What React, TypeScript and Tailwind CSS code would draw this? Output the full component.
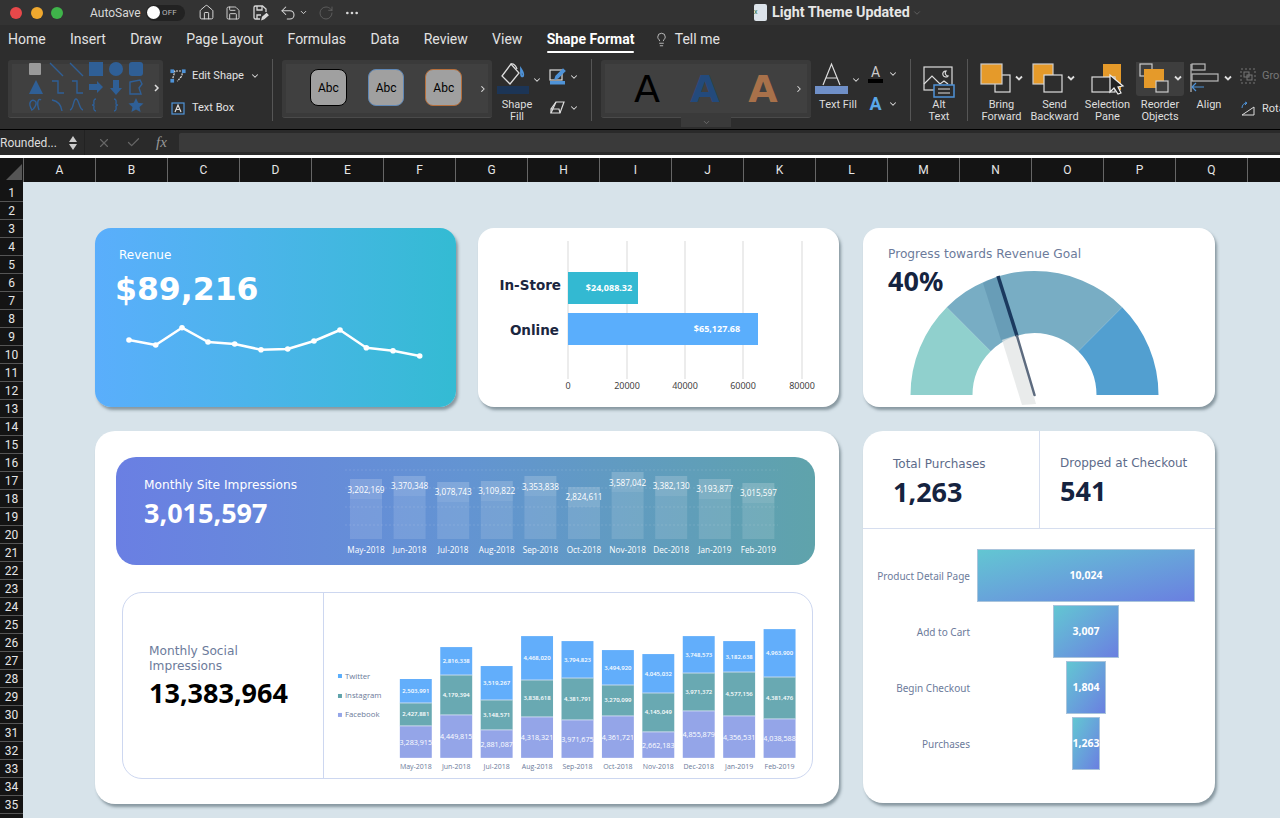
import type { ReactNode } from 'react'
import { ChevronDown, ChevronRight, Ellipsis, House, Lightbulb, RotateCw, Save, Undo2, X, Check } from 'lucide-react'

const columns = 'ABCDEFGHIJKLMNOPQ'.split('')
const rows = Array.from({ length: 35 }, (_, i) => i + 1)
const tabs = ['Home', 'Insert', 'Draw', 'Page Layout', 'Formulas', 'Data', 'Review', 'View']

const sitePoints = [
  { m: 'May-2018', v: '3,202,169', top: 479, ly: 493 },
  { m: 'Jun-2018', v: '3,370,348', top: 476, ly: 489 },
  { m: 'Jul-2018', v: '3,078,743', top: 482, ly: 495 },
  { m: 'Aug-2018', v: '3,109,822', top: 481, ly: 494 },
  { m: 'Sep-2018', v: '3,353,838', top: 476, ly: 490 },
  { m: 'Oct-2018', v: '2,824,611', top: 487, ly: 500 },
  { m: 'Nov-2018', v: '3,587,042', top: 472, ly: 486 },
  { m: 'Dec-2018', v: '3,382,130', top: 476, ly: 489 },
  { m: 'Jan-2019', v: '3,193,877', top: 479, ly: 492 },
  { m: 'Feb-2019', v: '3,015,597', top: 483, ly: 496 },
]

const socialPoints = [
  { m: 'May-2018', fb: '3,283,915', ig: '2,427,881', tw: '2,503,991', fy: 725, iy: 702, ty: 678 },
  { m: 'Jun-2018', fb: '4,449,815', ig: '4,179,394', tw: '2,816,338', fy: 714, iy: 674, ty: 646 },
  { m: 'Jul-2018', fb: '2,881,087', ig: '3,148,571', tw: '3,519,267', fy: 729, iy: 699, ty: 665 },
  { m: 'Aug-2018', fb: '4,318,321', ig: '3,838,618', tw: '4,468,020', fy: 716, iy: 679, ty: 635 },
  { m: 'Sep-2018', fb: '3,971,675', ig: '4,381,791', tw: '3,794,823', fy: 719, iy: 677, ty: 640 },
  { m: 'Oct-2018', fb: '4,361,721', ig: '3,270,099', tw: '3,494,920', fy: 715, iy: 684, ty: 649 },
  { m: 'Nov-2018', fb: '2,662,183', ig: '4,145,049', tw: '4,045,032', fy: 731, iy: 692, ty: 653 },
  { m: 'Dec-2018', fb: '4,855,879', ig: '3,971,372', tw: '3,748,573', fy: 710, iy: 672, ty: 635 },
  { m: 'Jan-2019', fb: '4,356,531', ig: '4,577,156', tw: '3,182,638', fy: 715, iy: 671, ty: 640 },
  { m: 'Feb-2019', fb: '4,038,588', ig: '4,381,476', tw: '4,963,900', fy: 718, iy: 676, ty: 628 },
]

const funnel = [
  { label: 'Product Detail Page', value: '10,024', width: 'w-[218px]' },
  { label: 'Add to Cart', value: '3,007', width: 'w-[66px]' },
  { label: 'Begin Checkout', value: '1,804', width: 'w-[40px]' },
  { label: 'Purchases', value: '1,263', width: 'w-[28px]' },
]

const spark = [
  [34, 120], [60.700, 125], [87, 107.700], [113, 122], [139.700, 124], [166, 129.700],
  [192.700, 129], [219, 121], [245, 110], [271.300, 127.700], [298, 130.700], [324.700, 136],
]

const uiFont = 'font-["Roboto","Liberation_Sans",sans-serif]'
const dejavu = 'font-["DejaVu_Sans","Liberation_Sans",sans-serif]'
const noto = 'font-["Noto_Sans","Open_Sans",sans-serif]'
const cardShadow = 'shadow-[2px_3px_3px_rgba(60,80,90,0.5)]'

function TitleBar() {
  return (
    <div className={`flex h-[25px] items-center bg-[#333333] text-[#d8d8d8] ${uiFont}`}>
      <div className="ml-[10px] flex gap-[8.500px]">
        <span className="h-[12px] w-[12px] rounded-full bg-[#e8484a]" />
        <span className="h-[12px] w-[12px] rounded-full bg-[#efa82e]" />
        <span className="h-[12px] w-[12px] rounded-full bg-[#3fb44a]" />
      </div>
      <span className="ml-[27px] w-[56px] text-[12px]">AutoSave</span>
      <div className="flex h-[16px] w-[39px] items-center rounded-full bg-[#222222] pl-[1px]">
        <span className="h-[13px] w-[13px] rounded-full bg-white" />
        <span className="ml-[2px] text-[8px] tracking-wide text-[#bbbbbb]">OFF</span>
      </div>
      <House className="ml-[13px]" size={17} strokeWidth={1.4} />
      <Save className="ml-[10px]" size={16} strokeWidth={1.4} />
      <svg className="ml-[10px]" width="18" height="18" viewBox="0 0 18 18" fill="none" stroke="currentColor" strokeWidth="1.3">
        <path d="M9 15H4.500A1.500 1.500 0 0 1 3 13.500v-10A1.500 1.500 0 0 1 4.500 2h7L15 5v3" />
        <path d="M6 2v4h5V2M6 15v-4h4" />
        <path d="M11 15.500l.6-2.300 4-3.600 1.400 1.500-4 3.700z" fill="currentColor" />
      </svg>
      <Undo2 className="ml-[10px]" size={18} strokeWidth={1.4} />
      <ChevronDown className="ml-[2px]" size={9} strokeWidth={2.5} />
      <RotateCw className="ml-[10px] text-[#666666]" size={16} strokeWidth={1.2} />
      <Ellipsis className="ml-[10px]" size={16} />
      <div className="ml-[394px] h-[17px] w-[13px] rounded-[2px] bg-[#dce3ea] text-[7px] leading-[17px] text-[#1e7145]">x</div>
      <span className="ml-[5px] text-[14.300px] font-bold text-[#e6e6e6]">Light Theme Updated</span>
      <ChevronDown className="ml-[2px] text-[#666666]" size={10} />
    </div>
  )
}

function TabBar() {
  return (
    <div className={`flex h-[28px] items-center gap-[24.300px] bg-[#2d2d2d] pl-[8px] pt-[1px] text-[14px] text-[#e2e2e2] ${uiFont}`}>
      {tabs.map((t) => (
        <span key={t}>{t}</span>
      ))}
      <span className="relative font-bold text-white">
        Shape Format
        <span className="absolute -bottom-[3px] left-0 h-[2px] w-full rounded bg-white" />
      </span>
      <div className="-ml-[5px] flex items-center gap-[6px]">
        <Lightbulb size={15} strokeWidth={1.2} />
        <span>Tell me</span>
      </div>
    </div>
  )
}

function Sep() {
  return <div className="mt-[6px] h-[62px] w-px shrink-0 bg-[#565656]" />
}

function Gallery({ width, children }: { width: string; children: ReactNode }) {
  return (
    <div className={`relative mt-[7px] h-[58px] shrink-0 rounded-[3px] border-b border-[#4a4a4a] bg-[#3a3a3a] p-[4px] ${width}`}>
      <div className="flex h-full w-full items-center bg-[#404040]">{children}</div>
    </div>
  )
}

function Chev({ className = '' }: { className?: string }) {
  return <ChevronDown className={`shrink-0 text-[#dddddd] ${className}`} size={10} strokeWidth={2.5} />
}

function ShapeIcons() {
  const c = '#2f5f96'
  return (
    <svg className="-ml-[4px] -mt-[4px] h-[58px] w-[155px] shrink-0" viewBox="0 0 155 58" fill="none" stroke={c} strokeWidth="1.4">
      <rect x="21" y="5" width="12" height="12" rx="1" fill="#9a9a9a" stroke="none" />
      <path d="M42 5l13 13M62 5l13 13" />
      <rect x="81" y="4" width="14" height="14" fill={c} stroke="none" />
      <circle cx="108" cy="11" r="7" fill={c} stroke="none" />
      <rect x="121" y="4" width="14" height="14" rx="3" fill={c} stroke="none" />
      <path d="M28 22l7 14H21z" fill={c} stroke="none" />
      <path d="M44 23h6v12h6M64 23h5v12h6" />
      <path d="M81 26h8v-3l6 6-6 6v-3h-8z" fill={c} stroke="none" />
      <path d="M105 22h6v8h3l-6 7-6-7h3z" fill={c} stroke="none" />
      <path d="M122 24l10-2 2 4-3 4 2 6h-11z" />
      <path d="M24 52c-5-8 0-11 3-9s-1 9-4 9M31 52c-3-9 0-12 2-10" />
      <path d="M44 42c6 1 9 4 10 11M62 52c4-1 3-11 6-11s3 10 7 11" />
      <path d="M88 41c-3 0-2 4-2 5s-1 1-2 1c1 0 2 0 2 1s-1 5 2 5M106 41c3 0 2 4 2 5s1 1 2 1c-1 0-2 0-2 1s1 5-2 5" />
      <path d="M128 40l2.200 4.800 5.300.6-4 3.500 1.100 5.100-4.600-2.600-4.600 2.600 1.100-5.100-4-3.500 5.300-.6z" fill={c} stroke="none" />
      <path d="M147 27l3 3-3 3" stroke="#dddddd" strokeWidth="1.5" />
    </svg>
  )
}

function AbcButton({ border }: { border: string }) {
  return (
    <div className={`-mt-[2px] flex h-[37px] w-[37px] items-center justify-center rounded-[8px] border-[1.5px] bg-[#a0a0a0] text-[12px] text-black ${border}`}>
      Abc
    </div>
  )
}

function RibbonLabel({ lines, className = '' }: { lines: string[]; className?: string }) {
  return (
    <div className={`text-center text-[11px] leading-[12px] text-[#dedede] ${className}`}>
      {lines.map((l) => (
        <div key={l}>{l}</div>
      ))}
    </div>
  )
}

function ArrangeButton({ width, lines, children }: { width: string; lines: string[]; children: ReactNode }) {
  return (
    <div className={`flex shrink-0 flex-col items-center pt-[9px] ${width}`}>
      <div className="h-[37px] w-full">{children}</div>
      <RibbonLabel lines={lines} className="whitespace-nowrap" />
    </div>
  )
}

const chevPath = (x: number, y: number) => `M${x - 3} ${y - 1.500}l3 3 3-3`

function Ribbon() {
  return (
    <div className={`flex h-[76px] items-start overflow-hidden bg-[#2d2d2d] pl-[8px] ${uiFont}`}>
      <Gallery width="w-[155px]">
        <ShapeIcons />
      </Gallery>
      <div className="flex w-[109px] shrink-0 flex-col gap-[16px] pl-[7px] pt-[15px] text-[11px] text-[#e2e2e2]">
        <div className="flex h-[16px] items-center">
          <svg width="16" height="14" viewBox="0 0 16 14" fill="none" stroke="#4f93d8" strokeWidth="1.200">
            <path d="M3 2h10M2 12l3-10M14 2c-3 2-1 4-3 6s-2 3-4 4" strokeDasharray="2 1" stroke="#dddddd" />
            <rect x="1" y="1" width="2.500" height="2.500" fill="#4f93d8" />
            <rect x="12.500" y="1" width="2.500" height="2.500" fill="#4f93d8" />
            <rect x="1" y="10.500" width="2.500" height="2.500" fill="#4f93d8" />
          </svg>
          <span className="ml-[6px]">Edit Shape</span>
          <Chev className="ml-[6px]" />
        </div>
        <div className="flex h-[16px] items-center">
          <svg width="16" height="15" viewBox="0 0 16 15" fill="none" stroke="#4f93d8" strokeWidth="1.200">
            <rect x="2" y="2" width="12" height="11" />
            <path d="M5 11l3-7 3 7M6.200 8.500h3.600" stroke="#dddddd" />
          </svg>
          <span className="ml-[6px]">Text Box</span>
        </div>
      </div>
      <Sep />
      <div className="ml-[9px]">
        <Gallery width="w-[210px]">
          <div className="flex w-full items-center gap-[21px] pl-[24px]">
            <AbcButton border="border-black" />
            <AbcButton border="border-[#5f87b5]" />
            <AbcButton border="border-[#b66f3c]" />
            <ChevronRight className="-ml-[5px] text-[#dddddd]" size={10} strokeWidth={2.5} />
          </div>
        </Gallery>
      </div>
      <div className="flex w-[53px] shrink-0 flex-col pt-[9px]">
        <div className="flex items-start pl-[5px]">
          <div className="w-[32px]">
            <svg width="32" height="24" viewBox="0 0 32 24" fill="none" stroke="#dddddd" strokeWidth="1.300">
              <path d="M14 2L5 14l8 8 9-11z" />
              <path d="M14 2c4-1 5 3 6 5" />
              <path d="M24 7c2 3 3 5 2 7-1 1-2 0-2-2s0-4 0-5z" stroke="#4f93d8" strokeWidth="1.800" />
            </svg>
            <div className="h-[8px] w-[32px] bg-[#1c3556]" />
          </div>
          <Chev className="ml-[3px] mt-[13px]" />
        </div>
        <RibbonLabel lines={['Shape', 'Fill']} className="mt-[5px] w-[50px]" />
      </div>
      <div className="flex w-[40px] shrink-0 flex-col gap-[15px] pl-[4px] pt-[15px]">
        <div className="flex items-center gap-[3px]">
          <svg width="17" height="17" viewBox="0 0 17 17" fill="none" stroke="#dddddd" strokeWidth="1.200">
            <rect x="1" y="2" width="12" height="10" />
            <path d="M6 11l1-3 7-7 2 2-7 7z" fill="#4f93d8" stroke="#4f93d8" />
            <rect x="1" y="13" width="15" height="3.500" fill="#4f93d8" stroke="none" />
          </svg>
          <Chev />
        </div>
        <div className="flex items-center gap-[3px]">
          <svg width="17" height="15" viewBox="0 0 17 15" fill="none" stroke="#dddddd" strokeWidth="1.200">
            <path d="M7 2h8l-4 11H2z" />
            <path d="M7 2L2 9v4M11 13l-1-4H2" />
          </svg>
          <Chev />
        </div>
      </div>
      <div className="ml-[6px]">
        <Sep />
      </div>
      <div className="ml-[9px]">
        <Gallery width="w-[210px]">
          <div className={`flex w-full items-center text-[38px] leading-none ${dejavu}`}>
            <span className="ml-[13px] w-[58px] text-center text-black">A</span>
            <span className="w-[58px] text-center font-bold text-[#234a7c]">A</span>
            <span className="w-[58px] text-center font-bold text-[#a8714a]">A</span>
            <ChevronRight className="ml-[2px] text-[#dddddd]" size={10} strokeWidth={2.5} />
          </div>
          <div className="absolute -bottom-[10px] left-[80px] flex h-[10px] w-[50px] items-center justify-center bg-[#3a3a3a]">
            <ChevronDown className="text-[#777777]" size={9} strokeWidth={2} />
          </div>
        </Gallery>
      </div>
      <div className="w-[55px] shrink-0 pl-[4px] pt-[9px]">
        <div className="flex items-start">
          <div className="w-[33px]">
            <svg width="33" height="24" viewBox="0 0 33 24" fill="none" stroke="#dddddd" strokeWidth="1.200">
              <path d="M8 23L16.500 2 25 23M11 16h11" />
            </svg>
            <div className="h-[8px] w-[33px] bg-[#6f8fc7]" />
          </div>
          <Chev className="ml-[3px] mt-[13px]" />
        </div>
        <RibbonLabel lines={['Text Fill']} className="mt-[5px] w-[46px] whitespace-nowrap" />
      </div>
      <div className="flex w-[39px] shrink-0 flex-col gap-[12px] pl-[2px] pt-[12px]">
        <div className="flex items-center gap-[5px]">
          <div className="w-[15px]">
            <div className="text-center text-[14px] leading-[14px] text-[#cccccc]">A</div>
            <div className="h-[4px] bg-black" />
          </div>
          <Chev />
        </div>
        <div className="flex items-center gap-[5px]">
          <span className="w-[15px] text-center text-[18px] font-bold leading-[18px] text-[#5aa7e8]">A</span>
          <Chev />
        </div>
      </div>
      <div className="ml-[5px]">
        <Sep />
      </div>
      <div className="flex w-[56px] shrink-0 flex-col items-center pt-[13px]">
        <svg width="32" height="32" viewBox="0 0 32 32" fill="none" stroke="#dddddd" strokeWidth="1.200">
          <rect x="1" y="1" width="28" height="23" />
          <path d="M1 18l8-8 8 8 4-3 4 3" />
          <path d="M23 5a3 3 0 1 0 2 5 3 3 0 0 1-2-5z" />
          <rect x="11" y="19" width="20" height="12" fill="#2d2d2d" stroke="#4f93d8" strokeWidth="1.500" />
          <path d="M15 23h12M15 27h12" />
        </svg>
        <RibbonLabel lines={['Alt', 'Text']} className="mt-[1px]" />
      </div>
      <Sep />
      <div className="ml-[7px] flex">
        <ArrangeButton width="w-[53px]" lines={['Bring', 'Forward']}>
          <svg width="53" height="36" viewBox="0 0 53 36" fill="none" stroke="#dddddd" strokeWidth="1.200">
            <rect x="20" y="13" width="15" height="17" />
            <rect x="6" y="2" width="21" height="20" fill="#e59a2a" stroke="#cccccc" />
            <path d={chevPath(44, 16)} strokeWidth="1.800" />
          </svg>
        </ArrangeButton>
        <ArrangeButton width="w-[53px]" lines={['Send', 'Backward']}>
          <svg width="53" height="36" viewBox="0 0 53 36" fill="none" stroke="#dddddd" strokeWidth="1.200">
            <rect x="5" y="2" width="20" height="20" fill="#e59a2a" stroke="#cccccc" />
            <rect x="16" y="13" width="18" height="17" fill="#2d2d2d" />
            <path d={chevPath(43, 16)} strokeWidth="1.800" />
          </svg>
        </ArrangeButton>
        <ArrangeButton width="w-[53px]" lines={['Selection', 'Pane']}>
          <svg width="53" height="36" viewBox="0 0 53 36" fill="none" stroke="#dddddd" strokeWidth="1.200">
            <rect x="22" y="2" width="18" height="26" fill="#e59a2a" stroke="none" />
            <rect x="11" y="15" width="23" height="15" fill="#2d2d2d" />
            <path d="M29 13l0 17 4-4 4 6 3-1-3-6 5-1z" fill="#222222" stroke="#eeeeee" />
          </svg>
        </ArrangeButton>
        <ArrangeButton width="w-[52px]" lines={['Reorder', 'Objects']}>
          <svg width="52" height="36" viewBox="0 0 52 36" fill="none" stroke="#cccccc" strokeWidth="1.200">
            <rect x="2" y="-2" width="48" height="36" rx="3" fill="#3e3e3e" stroke="none" />
            <rect x="6" y="2" width="12" height="12" />
            <rect x="10" y="7" width="20" height="19" fill="#e59a2a" stroke="none" />
            <rect x="22" y="19" width="12" height="11" fill="#3e3e3e" />
            <path d={chevPath(44, 16)} strokeWidth="1.800" stroke="#dddddd" />
          </svg>
        </ArrangeButton>
        <ArrangeButton width="w-[46px]" lines={['Align']}>
          <svg width="46" height="36" viewBox="0 0 46 36" fill="none" stroke="#bbbbbb" strokeWidth="1.200">
            <path d="M5 2v28" />
            <rect x="6" y="2" width="13" height="6" />
            <rect x="6" y="12" width="26" height="7" />
            <path d="M18 25H6m4-4l-4 4 4 4" stroke="#4f93d8" />
            <path d={chevPath(42, 16)} strokeWidth="1.800" stroke="#dddddd" />
          </svg>
        </ArrangeButton>
      </div>
      <div className="ml-[8px] flex shrink-0 flex-col gap-[16px] pt-[15px] text-[11px]">
        <div className="flex items-center gap-[6px] text-[#777777]">
          <svg width="16" height="16" viewBox="0 0 16 16" fill="none" stroke="#777777" strokeWidth="1">
            <rect x="1" y="1" width="14" height="14" strokeDasharray="2 2" />
            <rect x="4" y="4" width="5" height="5" />
            <rect x="7" y="7" width="5" height="5" />
          </svg>
          <span>Group</span>
        </div>
        <div className="flex items-center gap-[6px] text-[#dedede]">
          <svg width="16" height="16" viewBox="0 0 16 16" fill="none" stroke="#dddddd" strokeWidth="1">
            <path d="M2 14l12-8v8z" />
            <path d="M2 7c0-3 2-5 5-5M7 2L5 1M7 2L5 4" stroke="#4f93d8" />
          </svg>
          <span>Rotate</span>
        </div>
      </div>
    </div>
  )
}

function FormulaBar() {
  return (
    <div className={`flex h-[26px] items-center border-t border-black bg-[#2a2a2a] text-[#dedede] ${uiFont}`}>
      <span className="w-[62px] shrink-0 whitespace-nowrap text-[12px]">Rounded...</span>
      <div className="flex w-[22px] shrink-0 flex-col items-center gap-[2px]">
        <span className="h-0 w-0 border-x-[4px] border-b-[6px] border-x-transparent border-b-[#cccccc]" />
        <span className="h-0 w-0 border-x-[4px] border-t-[6px] border-x-transparent border-t-[#cccccc]" />
      </div>
      <div className="h-full w-px bg-[#222222]" />
      <X className="ml-[12px] text-[#666666]" size={14} strokeWidth={2} />
      <Check className="ml-[15px] text-[#666666]" size={15} strokeWidth={2} />
      <span className="ml-[15px] w-[15px] font-['Liberation_Serif',serif] text-[15px] italic text-[#999999]">fx</span>
      <div className="ml-[8px] h-[19px] flex-1 rounded-l-[2px] bg-[#3a3a3a]" />
    </div>
  )
}

function ColumnHeader() {
  return (
    <div className={`flex h-[27px] border-t-[3px] border-white bg-[#141414] text-[12px] text-[#e6e6e6] ${uiFont}`}>
      <div className="flex w-[24px] shrink-0 items-end justify-end border-r border-[#666666]">
        <span className="mb-[2px] mr-[1px] h-0 w-0 border-b-[16px] border-l-[16px] border-b-[#555555] border-l-transparent" />
      </div>
      {columns.map((c) => (
        <div key={c} className="flex w-[72px] shrink-0 items-center justify-center border-r border-[#666666]">
          {c}
        </div>
      ))}
    </div>
  )
}

function RowHeader() {
  return (
    <div className={`h-full w-[23px] shrink-0 overflow-hidden bg-[#141414] pt-[2px] text-[12px] text-[#e6e6e6] ${uiFont}`}>
      {rows.map((r) => (
        <div key={r} className="flex h-[18px] items-center justify-center border-b border-[#555555]">
          {r}
        </div>
      ))}
    </div>
  )
}

function RevenueCard() {
  const line = spark.map((p) => p.join(',')).join(' ')
  return (
    <div className={`h-[179px] w-[361px] shrink-0 rounded-[16px] bg-gradient-to-r from-[#5aaefc] to-[#33bbd3] text-white ${cardShadow} ${dejavu}`}>
      <div className="pl-[24px] pt-[20px] text-[12px] leading-[15px]">Revenue</div>
      <div className="pl-[20px] pt-[6px] text-[31.500px] font-bold leading-[40px]">$89,216</div>
      <svg className="block" width="361" height="98" viewBox="0 0 361 98">
        <g transform="translate(0 -89)">
          <polyline points={line} fill="none" stroke="white" strokeWidth="2.500" strokeLinejoin="round" />
          {spark.map(([x, y]) => (
            <circle key={x} cx={x} cy={y} r="2.800" fill="white" />
          ))}
        </g>
      </svg>
    </div>
  )
}

function ChannelCard() {
  return (
    <div className={`h-[179px] w-[361px] shrink-0 overflow-hidden rounded-[16px] bg-white ${cardShadow}`}>
      <svg className="block" width="361" height="179" viewBox="478 228 361 179">
        {[568, 627, 685, 743, 802].map((x) => (
          <line key={x} x1={x} x2={x} y1="241" y2="379" stroke="#d9d9d9" strokeWidth="1" />
        ))}
        <rect x="568" y="272" width="70" height="32" fill="#33b9d2" />
        <rect x="568" y="313" width="190" height="32" fill="#5aaefc" />
        <g fontFamily="'Noto Sans','Open Sans',sans-serif" fontSize="9" fontWeight="700" fill="white" textAnchor="middle">
          <text x="609" y="291">$24,088.32</text>
          <text x="717" y="332">$65,127.68</text>
        </g>
        <g fontFamily="'DejaVu Sans',sans-serif" fontSize="13.500" fontWeight="700" fill="#1b2640" textAnchor="end">
          <text x="561" y="289.500">In-Store</text>
          <text x="559" y="334.500">Online</text>
        </g>
        <g fontFamily="'Noto Sans','Open Sans',sans-serif" fontSize="9" fill="#444444" textAnchor="middle">
          {[[568, '0'], [627, '20000'], [685, '40000'], [743, '60000'], [802, '80000']].map(([x, t]) => (
            <text key={t} x={x} y="389">{t}</text>
          ))}
        </g>
      </svg>
    </div>
  )
}

function GaugeCard() {
  return (
    <div className={`h-[179px] w-[352px] shrink-0 rounded-[16px] bg-white ${cardShadow}`}>
      <div className={`pl-[25px] pt-[17px] text-[12.200px] leading-[18px] text-[#6c7b9b] ${dejavu}`}>Progress towards Revenue Goal</div>
      <div className={`pl-[25px] text-[27px] font-bold leading-[36px] text-[#15233f] ${noto}`}>40%</div>
      <svg className="-mt-[31px] block" width="352" height="148" viewBox="863 268 352 148">
        <path d="M910.500 395A124 124 0 0 1 946.800 307.300L990.700 351.200A62 62 0 0 0 972.500 395Z" fill="#90d0cd" />
        <path d="M946.800 307.300A124 124 0 0 1 1122.200 307.300L1078.300 351.200A62 62 0 0 0 990.700 351.200Z" fill="#78adc4" />
        <path d="M1122.200 307.300A124 124 0 0 1 1158.500 395L1096.500 395A62 62 0 0 0 1078.300 351.200Z" fill="#529fd0" />
        <path d="M983 283L998 276 1016 335 1001 340Z" fill="#3f7396" opacity="0.28" />
        <path d="M1002 340L1017 335 1036 404 1022 405Z" fill="#dfe2e3" opacity="0.7" />
        <line x1="998" y1="276" x2="1017" y2="336" stroke="#1b3a5f" strokeWidth="3.500" />
        <line x1="1017" y1="336" x2="1034.500" y2="395" stroke="#5d6b7f" strokeWidth="2.500" strokeLinecap="round" />
      </svg>
    </div>
  )
}

function SiteBanner() {
  return (
    <div className="flex h-[108px] w-[699px] items-stretch overflow-hidden rounded-[20px] bg-gradient-to-r from-[#6a7fe3] via-[#6394d2] to-[#5fa3ab] text-white">
      <div className="w-[225px] shrink-0 pl-[28px] pt-[20px]">
        <div className={`text-[12.200px] leading-[16px] ${dejavu}`}>Monthly Site Impressions</div>
        <div className={`mt-[2px] text-[27px] font-bold leading-[36px] ${noto}`}>3,015,597</div>
      </div>
      <svg className="block" width="474" height="108" viewBox="341 457 474 108">
        {[470, 488, 507, 525].map((y) => (
          <line key={y} x1="345" x2="778" y1={y} y2={y} stroke="white" strokeOpacity="0.12" strokeDasharray="2 2" />
        ))}
        <g fontFamily="'Open Sans','Noto Sans',sans-serif" fontSize="8.200" fill="white" textAnchor="middle">
          {sitePoints.map((p, i) => {
            const x = 350 + i * 43.600
            return (
              <g key={p.m}>
                <rect x={x} y={p.top} width="32" height={539 - p.top} fill="white" opacity="0.12" />
                <rect x={x} y={p.top} width="32" height={Math.min(20, 539 - p.top)} fill="white" opacity="0.08" />
                <text x={x + 16} y={p.ly}>{p.v}</text>
                <text x={x + 16} y="553">{p.m}</text>
              </g>
            )
          })}
        </g>
      </svg>
    </div>
  )
}

function SocialChart() {
  return (
    <svg className="block" width="489" height="187" viewBox="324 592 489 187">
      <g fontFamily="'Open Sans','Noto Sans',sans-serif" fontSize="7.800" fill="#6b7a99">
        <rect x="338" y="673" width="4" height="4" fill="#5aaefc" />
        <text x="345" y="677.500">Twitter</text>
        <rect x="338" y="693" width="4" height="4" fill="#5fa3ab" />
        <text x="345" y="697.500">Instagram</text>
        <rect x="338" y="712" width="4" height="4" fill="#94a5e8" />
        <text x="345" y="716.500">Facebook</text>
      </g>
      <g fontFamily="'Open Sans','Noto Sans',sans-serif" textAnchor="middle">
        {socialPoints.map((p, i) => {
          const x = 400 + i * 40.500
          const cx = x + 16
          return (
            <g key={p.m}>
              <rect x={x} y={p.ty} width="32" height={p.iy - p.ty} fill="#62aefb" />
              <rect x={x} y={p.iy} width="32" height={p.fy - p.iy} fill="#69a9b2" />
              <rect x={x} y={p.fy} width="32" height={757 - p.fy} fill="#94a5e8" />
              <path d={`M${x} ${p.iy}h32M${x} ${p.fy}h32`} stroke="#dbe4f5" strokeWidth="0.800" />
              <text x={cx} y={(p.ty + p.iy) / 2 + 2} fontSize="6" fontWeight="600" fill="white">{p.tw}</text>
              <text x={cx} y={(p.iy + p.fy) / 2 + 2} fontSize="6" fontWeight="600" fill="white">{p.ig}</text>
              <text x={cx} y={(p.fy + 757) / 2 + 3} fontSize="7.200" fill="white">{p.fb}</text>
              <text x={cx} y="768" fontSize="7" fill="#6b7a99">{p.m}</text>
            </g>
          )
        })}
      </g>
    </svg>
  )
}

function ImpressionsCard() {
  return (
    <div className={`flex h-[373px] w-[744px] shrink-0 flex-col rounded-[20px] bg-white pl-[21px] pt-[26px] ${cardShadow}`}>
      <SiteBanner />
      <div className="ml-[6px] mt-[27px] flex h-[187px] w-[691px] overflow-hidden rounded-[20px] border border-[#cdd7f0]">
        <div className="w-[201px] shrink-0 border-r border-[#cdd7f0] pl-[26px] pt-[51px]">
          <div className={`text-[12.200px] leading-[15px] text-[#6c7b9b] ${dejavu}`}>
            Monthly Social
            <br />
            Impressions
          </div>
          <div className={`mt-[1px] whitespace-nowrap text-[27px] font-bold leading-[36px] text-black ${noto}`}>13,383,964</div>
        </div>
        <SocialChart />
      </div>
    </div>
  )
}

function FunnelCard() {
  return (
    <div className={`flex h-[372px] w-[352px] shrink-0 flex-col rounded-[20px] bg-white ${cardShadow}`}>
      <div className="flex h-[98px] border-b border-[#d6deef]">
        <div className="w-[177px] border-r border-[#d6deef] pl-[30px] pt-[26px]">
          <div className={`text-[12px] leading-[15px] text-[#5d6b8a] ${dejavu}`}>Total Purchases</div>
          <div className={`pt-[1px] text-[27px] font-bold leading-[38px] text-[#15233f] ${noto}`}>1,263</div>
        </div>
        <div className="pl-[20px] pt-[25px]">
          <div className={`text-[12px] leading-[15px] text-[#5d6b8a] ${dejavu}`}>Dropped at Checkout</div>
          <div className={`pt-[1px] text-[27px] font-bold leading-[38px] text-[#15233f] ${noto}`}>541</div>
        </div>
      </div>
      <div className={`flex flex-col gap-[3px] pt-[20px] ${noto}`}>
        {funnel.map((f) => (
          <div key={f.label} className="flex h-[53px] items-center">
            <span className="w-[107px] shrink-0 whitespace-nowrap pt-[1px] text-right text-[10px] text-[#6c7b9b]">{f.label}</span>
            <div className="ml-[7px] flex w-[218px] justify-center">
              <div className={`flex h-[53px] items-center justify-center border border-[#a9c4dc] bg-gradient-to-br from-[#62c6d2] to-[#6a7fe0] text-[10.500px] font-bold text-white ${f.width}`}>
                {f.value}
              </div>
            </div>
          </div>
        ))}
      </div>
    </div>
  )
}

export default function App() {
  return (
    <div className="flex h-[818px] w-full flex-col overflow-hidden bg-[#d7e3ea]">
      <TitleBar />
      <TabBar />
      <Ribbon />
      <FormulaBar />
      <ColumnHeader />
      <div className="flex min-h-0 flex-1">
        <RowHeader />
        <div className="flex flex-1 flex-col gap-[24px] pl-[72px] pt-[46px]">
          <div className="flex">
            <RevenueCard />
            <div className="ml-[22px]">
              <ChannelCard />
            </div>
            <div className="ml-[24px]">
              <GaugeCard />
            </div>
          </div>
          <div className="flex gap-[24px]">
            <ImpressionsCard />
            <FunnelCard />
          </div>
        </div>
      </div>
    </div>
  )
}
